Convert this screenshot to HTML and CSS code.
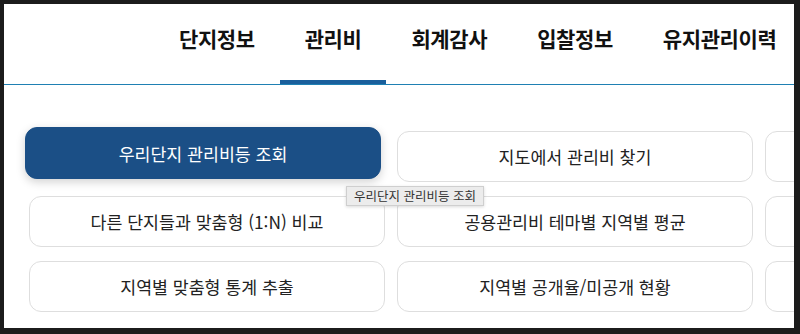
FILE: index.html
```html
<!DOCTYPE html>
<html lang="ko">
<head>
<meta charset="utf-8">
<title>관리비</title>
<link rel="stylesheet" href="styles.css">
</head>
<body>
<div class="frame">
  <header class="header">
    <nav class="nav">
      <a class="nav-item">단지정보</a>
      <a class="nav-item active">관리비</a>
      <a class="nav-item">회계감사</a>
      <a class="nav-item">입찰정보</a>
      <a class="nav-item">유지관리이력</a>
    </nav>
  </header>
  <main class="menu">
    <button class="tile tile-active">우리단지 관리비등 조회</button>
    <button class="tile">지도에서 관리비 찾기</button>
    <button class="tile"></button>
    <button class="tile">다른 단지들과 맞춤형 (1:N) 비교</button>
    <button class="tile">공용관리비 테마별 지역별 평균</button>
    <button class="tile"></button>
    <button class="tile">지역별 맞춤형 통계 추출</button>
    <button class="tile">지역별 공개율/미공개 현황</button>
    <button class="tile"></button>
  </main>
  <div class="tooltip">우리단지 관리비등 조회</div>
</div>
</body>
</html>
```
FILE: styles.css
```css
* { box-sizing: border-box; }
html, body { margin: 0; padding: 0; }
body {
  background: #1c1c1c;
  width: 800px;
  height: 334px;
  overflow: hidden;
  font-family: "Noto Sans CJK KR", "Noto Sans", sans-serif;
}
.frame {
  position: relative;
  margin: 4px 0 0 4px;
  width: 790px;
  height: 324px;
  background: #fff;
  overflow: hidden;
}
.header {
  height: 81px;
  border-bottom: 1px solid #1f80b3;
}
.nav {
  display: flex;
  margin-left: 150px;
  height: 80px;
  white-space: nowrap;
}
.nav-item {
  position: relative;
  flex: none;
  padding: 20px 25px 0;
  font-size: 21px;
  line-height: 28px;
  font-weight: 700;
  color: #111;
  letter-spacing: -0.4px;
}
.nav-item.active::after {
  content: "";
  position: absolute;
  left: 0;
  right: 0;
  bottom: 0;
  height: 4px;
  background: #1a5f9c;
}
.menu {
  display: grid;
  grid-template-columns: repeat(3, 356px);
  grid-auto-rows: 51px;
  column-gap: 12px;
  row-gap: 14px;
  margin: 46px 0 0 25px;
}
.tile {
  font-family: inherit;
  font-size: 17.3px;
  font-weight: 400;
  color: #222;
  background: #fff;
  border: 1px solid #dedede;
  border-radius: 12px;
  padding: 0;
  white-space: nowrap;
}
.tile-active {
  background: #1b4f86;
  border-color: #1b4f86;
  color: #fff;
  transform: translate(-4px, -4px);
  height: 52px;
  box-shadow: 0 3px 10px rgba(0, 0, 0, 0.18);
}
.tooltip {
  position: absolute;
  left: 342px;
  top: 182px;
  height: 20px;
  padding: 0 7px;
  font-size: 12.5px;
  line-height: 18px;
  color: #333;
  background: #ececec;
  border: 1px solid #cfcfcf;
  box-shadow: 0 1px 3px rgba(0, 0, 0, 0.15);
  white-space: nowrap;
}
```
